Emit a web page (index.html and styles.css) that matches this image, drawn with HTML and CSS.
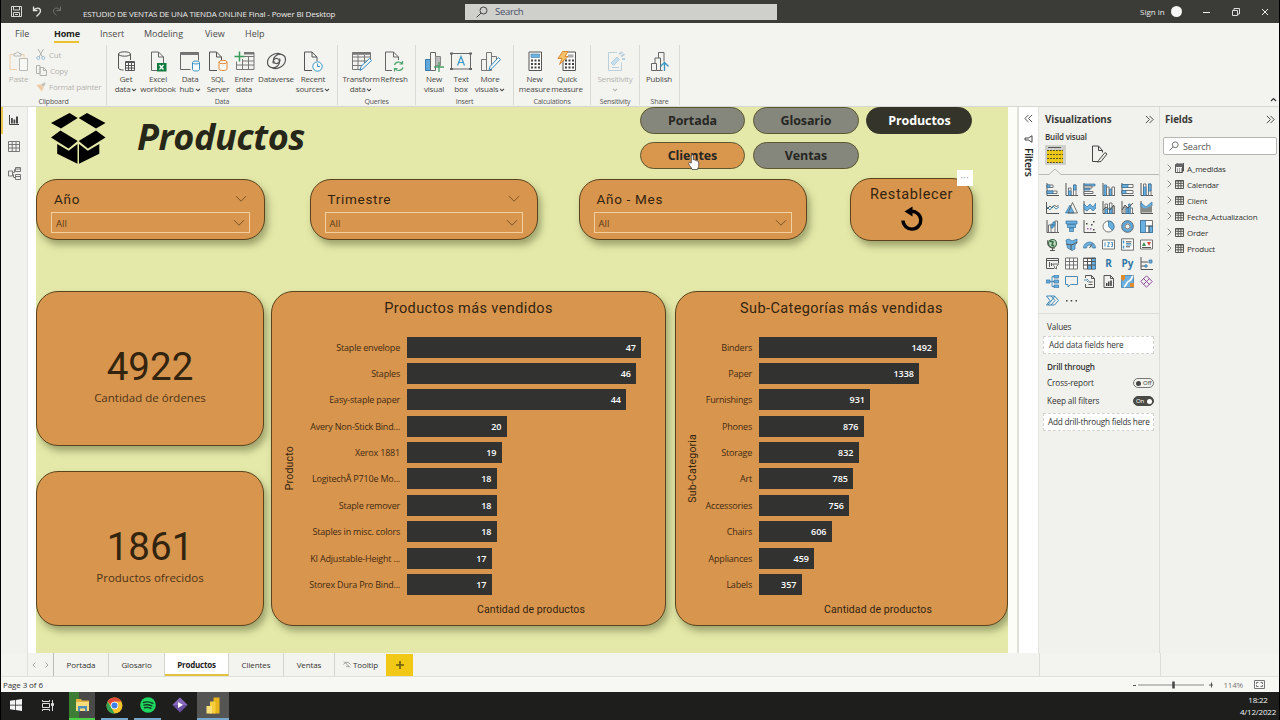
FILE: index.html
```html
<!DOCTYPE html>
<html lang="es">
<head>
<meta charset="utf-8">
<title>ESTUDIO DE VENTAS DE UNA TIENDA ONLINE Final - Power BI Desktop</title>
<link rel="stylesheet" href="styles.css">
</head>
<body>
<svg class="defs" width="0" height="0">
  <symbol id="chev" viewBox="0 0 12 8"><path d="M1 1.2l5 5 5-5" fill="none" stroke="currentColor"/></symbol>
  <symbol id="mini" viewBox="0 0 6 4"><path d="M1 .8l2 2 2-2" fill="none" stroke="currentColor" stroke-width="1.1"/></symbol>
  <symbol id="dbl" viewBox="0 0 10 10"><path d="M1 1l4 4-4 4M5 1l4 4-4 4" fill="none" stroke="currentColor"/></symbol>
  <symbol id="mag" viewBox="0 0 12 12"><circle cx="7.500" cy="4.500" r="3.500" fill="none" stroke="currentColor"/><path d="M5 7l-4.300 4.300" stroke="currentColor" fill="none"/></symbol>
  <symbol id="tbl" viewBox="0 0 9 9"><path d="M.5 .5h8v8h-8zM.5 3.300h8M.5 5.800h8M3.200 .5v8M5.900 .5v8" fill="none" stroke="#4a4a47" stroke-width=".9"/><path d="M.5 .5h8v1h-8z" fill="#4a4a47"/></symbol>
</svg>
<div class="app">
  <header class="titlebar">
    <div class="quick">
      <svg width="11" height="11" viewBox="0 0 11 11" fill="none" stroke="#d8d8d4"><path d="M.5 .5h10v10h-10zM2.500 .5v3.500h6v-3.500M2.500 10.500v-4h6v4M4 8.500h3"/></svg>
      <svg width="10" height="11" viewBox="0 0 10 11" fill="none" stroke="#e4e4e0" stroke-width="1.300"><path d="M1.500 .5v4h4M1.500 4.500c2-3.500 7-3 7 .500 0 1.800-1.500 3-4 5.500"/></svg>
      <svg width="10" height="11" viewBox="0 0 10 11" fill="none" stroke="#74746f"><path d="M8.500 .5v4h-4M8.500 4.500c-2-3.500-7-3-7 .500 0 1.800 1.500 3 3 4.500"/></svg>
    </div>
    <div class="doc-title">ESTUDIO DE VENTAS DE UNA TIENDA ONLINE Final - Power BI Desktop</div>
    <div class="search-top"><svg width="12" height="12"><use href="#mag"/></svg><span>Search</span></div>
    <div class="win">
      <span class="signin">Sign in</span><i class="avatar"></i>
      <svg class="w-min" width="8" height="8"><path d="M0 4.500h7" stroke="#eee"/></svg>
      <svg class="w-max" width="8" height="8" fill="none" stroke="#ddd"><path d="M.5 2.500h5v5h-5zM2 2.500v-2h5.500v5.500h-2"/></svg>
      <svg width="8" height="8" stroke="#eee"><path d="M1 1l6 6M7 1l-6 6"/></svg>
    </div>
  </header>

  <section class="ribbon">
    <nav class="menu">
      <span class="m-file">File</span><span class="m-home">Home</span><span class="m-insert">Insert</span><span class="m-model">Modeling</span><span class="m-view">View</span><span>Help</span>
    </nav>
    <div class="groups">
      <div class="group g-clip">
        <div class="clip">
          <div class="tool paste"><svg width="20" height="21" viewBox="0 0 20 21" fill="none"><path d="M8 18.500h-7v-15h4M11 3.500h4v3" stroke="#efcfa8"/><path d="M5 5v-2.500h2c0-2 3-2 3 0h2v2.500z" stroke="#b9b9b6"/><path d="M10.500 7.500h8v12h-8z" stroke="#b9b9b6" fill="#f7f7f4"/></svg><span>Paste</span></div>
          <div class="clip-list">
            <div><svg width="10" height="11" viewBox="0 0 10 11" fill="none"><path d="M2 0l4.500 8M7.500 0l-4.500 8" stroke="#b0b0ad"/><circle cx="2.200" cy="9" r="1.500" stroke="#9fc4de"/><circle cx="7.300" cy="9" r="1.500" stroke="#9fc4de"/></svg><span>Cut</span></div>
            <div><svg width="11" height="11" viewBox="0 0 11 11" fill="none" stroke="#b0b0ad"><path d="M.5 .5h3.500v8h-3.500zM4 2.500h3.500l3 3v5h-6.500zM7.500 2.500v3h3"/></svg><span>Copy</span></div>
            <div><svg width="10" height="10" viewBox="0 0 10 10"><path d="M.5 3l4-.5 3 3-1.500 4z" fill="#f0c9a0"/><path d="M5 2.500l3.500-2 1 1-2 3.500z" fill="#bdbdb9"/></svg><span>Format painter</span></div>
          </div>
        </div>
        <b>Clipboard</b>
      </div>
      <div class="group g-data">
        <div class="tools">
          <div class="tool t32"><svg width="20" height="21" viewBox="0 0 20 21" fill="none" stroke="#555"><path d="M2.500 3v14c0 1.200 2 2 5 2M14.500 3v6"/><ellipse cx="8.500" cy="3" rx="6" ry="2.200"/><path d="M9.500 10.500h9v9h-9z" fill="#f6f6f3"/><path d="M9.500 11.500h9M9.500 14.500h9M9.500 17h9M12.500 11v8.500M15.500 11v8.500"/></svg><span>Get</span><span>data <svg width="6" height="4"><use href="#mini"/></svg></span></div>
          <div class="tool t32"><svg width="20" height="21" viewBox="0 0 20 21"><path d="M10 19.500h-6.500v-18.500h7l5 5v6M10.500 1v5h5" fill="none" stroke="#666"/><path d="M9 12h9.500v8.500h-9.500z" fill="#107c41"/><path d="M11.500 14l4 4.500M15.500 14l-4 4.500" stroke="#fff" stroke-width="1.300"/></svg><span>Excel</span><span>workbook</span></div>
          <div class="tool t32"><svg width="22" height="21" viewBox="0 0 22 21" fill="none"><path d="M11.500 18.500h-10v-17h18v8" stroke="#666"/><path d="M1.500 1.500h18v2.500h-18z" fill="#777"/><path d="M13.500 11.500v7c0 2 7 2 7 0v-7" fill="#f6fafc" stroke="#3b95c4"/><ellipse cx="17" cy="11.500" rx="3.500" ry="1.500" stroke="#3b95c4"/></svg><span>Data</span><span>hub <svg width="6" height="4"><use href="#mini"/></svg></span></div>
          <div class="tool t24"><svg width="20" height="21" viewBox="0 0 20 21" fill="none"><path d="M9 19.500h-7.500v-18.500h7l5 5v3M8.500 1v5h5" stroke="#555"/><path d="M11 11v7c0 2 8 2 8 0v-7" stroke="#e08a3c" fill="#faf6f0"/><ellipse cx="15" cy="11" rx="4" ry="1.700" stroke="#e08a3c"/></svg><span>SQL</span><span>Server</span></div>
          <div class="tool t28"><svg width="21" height="21" viewBox="0 0 21 21" fill="none" stroke="#777"><path d="M10 1.500h10v17h-17.500v-8M10 5.500h10M8 10h12M2.500 14h17.500M8.500 8v10.500M14.500 5.500v13"/><path d="M10 2.500h10" stroke-width="2"/><path d="M5.500 .5v10M.5 5.500h10" stroke="#3a9b5a" stroke-width="1.500"/></svg><span>Enter</span><span>data</span></div>
          <div class="tool t36"><svg width="21" height="21" viewBox="0 0 21 21" fill="none" stroke="#555" stroke-width="1.200"><path d="M14.500 3c-5-2-12.500 2-13 8-.3 5.500 6 7.500 10 4 3-2.500 2.500-7-.500-7.500-3-.4-5 3-3.500 5"/><path d="M6.500 17c5 2 12.500-2 13-8 .3-5.500-6-7.500-10-4-3 2.500-2.500 7 .500 7.500 3 .4 5-3 3.500-5"/></svg><span>Dataverse</span></div>
          <div class="tool t38"><svg width="20" height="21" viewBox="0 0 20 21" fill="none"><path d="M9 19.500h-7.500v-18.500h7.500l5 5v4M9 1v5h5" stroke="#555"/><circle cx="14.500" cy="15.500" r="4.700" stroke="#3b95c4" fill="#f6fafc"/><path d="M14.500 12.500v3h2.500" stroke="#3b95c4"/></svg><span>Recent</span><span>sources <svg width="6" height="4"><use href="#mini"/></svg></span></div>
        </div>
        <b>Data</b>
      </div>
      <div class="group g-query">
        <div class="tools">
          <div class="tool t36"><svg width="21" height="21" viewBox="0 0 21 21" fill="none" stroke="#777"><path d="M10 18.500h-8.500v-17h18v7M1.500 6h18M1.500 10h16M1.500 14.500h10M7 4v14.500M13.500 4v8"/><path d="M1.500 2.500h18" stroke-width="2.500"/><path d="M9 19.500l1-4 8.500-8 2 2-8.500 8z" fill="#f2f8fc" stroke="#3b86b8"/></svg><span>Transform</span><span>data <svg width="6" height="4"><use href="#mini"/></svg></span></div>
          <div class="tool t30"><svg width="20" height="21" viewBox="0 0 20 21" fill="none"><path d="M8 19.500h-6.500v-18.500h8l5 5v3M9.500 1v5h5" stroke="#666"/><path d="M10.500 14c1-3.500 6-4 8-1M18.500 10v3h-3M19 16.500c-1 3.500-6 4-8 1M10.500 20.500v-3h3" stroke="#4aa36a" stroke-width="1.200"/></svg><span>Refresh</span></div>
        </div>
        <b>Queries</b>
      </div>
      <div class="group g-insert">
        <div class="tools">
          <div class="tool t28"><svg width="20" height="21" viewBox="0 0 20 21"><path d="M1.500 8.500h5v11h-5z" fill="#5fa8dc" stroke="#3b78a8"/><path d="M6.500 1.500h5v18h-5z" fill="#f6f6f3" stroke="#666"/><path d="M11.500 5.500h5v9h-5z" fill="#bbb" stroke="#888"/><path d="M15 11v10M10 16h10" stroke="#4aa36a" stroke-width="1.300"/></svg><span>New</span><span>visual</span></div>
          <div class="tool t26"><svg width="22" height="21" viewBox="0 0 22 21" fill="none"><path d="M1.500 2.500h19v15.500h-19z" stroke="#666"/><path d="M0 1.500h3v2h-3zM19 1.500h3v2h-3zM0 17h3v2h-3zM19 17h3v2h-3z" fill="#666"/><path d="M7.500 14.500l3.500-9 3.500 9M8.700 11.500h4.600" stroke="#3b95c4" stroke-width="1.200"/></svg><span>Text</span><span>box</span></div>
          <div class="tool t32"><svg width="21" height="21" viewBox="0 0 21 21" fill="none"><path d="M1.500 8.500h5v11h-5zM6.500 1.500h5v18h-5zM11.500 5.500h5v4" stroke="#777"/><path d="M9 19.500l1-4 8.500-9 2 2-8.500 9z" fill="#f2f8fc" stroke="#3b86b8"/></svg><span>More</span><span>visuals <svg width="6" height="4"><use href="#mini"/></svg></span></div>
        </div>
        <b>Insert</b>
      </div>
      <div class="group g-calc">
        <div class="tools">
          <div class="tool t31"><svg width="20" height="21" viewBox="0 0 20 21"><path d="M4 1h12.500v18.500h-12.500z" fill="#fbfbf9" stroke="#555"/><path d="M6 3h8.500v3.500h-8.500z" fill="#6eb3e0" stroke="#3b78a8" stroke-width=".6"/><path d="M6 9.500h9M6 13h9M6 16.500h9" stroke="#444" stroke-width="2" stroke-dasharray="2 1.500"/></svg><span>New</span><span>measure</span></div>
          <div class="tool t34"><svg width="22" height="21" viewBox="0 0 22 21"><path d="M7 1h12.500v18.500h-12.500z" fill="#fbfbf9" stroke="#555"/><path d="M12 3.500h5.500v3h-5.500z" fill="#aaa"/><path d="M9 9.500h9M9 13h9M9 16.500h9" stroke="#444" stroke-width="2" stroke-dasharray="2 1.500"/><path d="M6.500 .5h5.500l-3 5h3l-8.500 8 2.500-6h-4z" fill="#f7c26a" stroke="#d9822b" stroke-width=".9"/></svg><span>Quick</span><span>measure</span></div>
        </div>
        <b>Calculations</b>
      </div>
      <div class="group g-sens">
        <div class="tools dim">
          <div class="tool t48"><svg width="21" height="21" viewBox="0 0 21 21" fill="none" stroke="#b7cfdd"><path d="M12 1.500h-8.500v18h13v-8" stroke="#bcd0da"/><path d="M6 12l6-6 2.500 2.500-6 6z" fill="#c4e0ef"/><path d="M14 3l3.500-2M16 5.500l3.500-2.500M17 8h3" stroke-width="2"/><path d="M7 16.500h7"/></svg><span>Sensitivity</span><span><svg width="6" height="4"><use href="#mini"/></svg></span></div>
        </div>
        <b>Sensitivity</b>
      </div>
      <div class="group g-share">
        <div class="tools">
          <div class="tool t38"><svg width="20" height="21" viewBox="0 0 20 21" fill="none" stroke="#666"><path d="M2.500 12.500h5v7h-5zM6 12.500v-5.500h5.500v12.500h-4M9.500 7v-5.500h5.500v9M11.500 19.500h2"/><path d="M15.500 20v-8M11.500 15.500l4-4 4 4" stroke="#3b95c4" stroke-width="1.300"/></svg><span>Publish</span></div>
        </div>
        <b>Share</b>
      </div>
      <svg class="collapse" width="7" height="5"><path d="M1 4l2.500-2.500L6 4" fill="none" stroke="#333" stroke-width="1.200"/></svg>
    </div>
  </section>

  <main class="work">
    <aside class="rail">
      <span class="rail-on"><svg width="10" height="10" viewBox="0 0 10 10"><path d="M.5 0v9.500h9.500" fill="none" stroke="#444"/><path d="M2 3h1.800v5.500h-1.800zM4.500 4.500h1.800v4h-1.800zM7 1.500h2v7h-2z" fill="#444"/></svg></span>
      <span><svg width="12" height="11" viewBox="0 0 12 11" fill="none" stroke="#777"><path d="M.5 .5h11v10h-11zM.5 3.500h11M.5 7h11M4.200 .5v10M8 .5v10"/></svg></span>
      <span><svg width="13" height="13" viewBox="0 0 13 13" fill="none" stroke="#777"><path d="M.5 4h4v5h-4zM7.500 .5h5v4h-5zM7.500 7.500h5v5h-5zM4.500 5.500h2v-3h1M4.500 7.500h1v3h2M7.500 9.500h5M7.500 2h5"/></svg></span>
    </aside>
    <div class="gutter"></div>
    <section class="canvas">
      <div class="head">
        <svg class="box" width="57" height="52" viewBox="0 0 57 52"><path d="M1 10L19.500 0l8.200 5L11 15.500zM28.700 5L37 0l18.500 10-9.500 5.500zM1 24.500l9.500-7L27.700 28l-9.200 7.500zM55.500 24.500l-9.500-7L28.700 28l9.200 7.500zM7.200 31l11.500 6.800 8.800-6.800v19.800l-20.300-10zM49.300 31l-11.500 6.800L29 31v19.800l20.300-10z" fill="#000"/></svg>
        <h1>Productos</h1>
        <nav class="nav">
          <a>Portada</a><a>Glosario</a><a class="cur">Productos</a><a class="hot">Clientes<svg class="hand" width="12" height="16" viewBox="0 0 12 16"><path d="M3.300 9V1.800c0-1.300 1.900-1.300 1.900 0V6c.2-1 1.700-1 1.900 0v.6c.3-.9 1.700-.8 1.800.2v.6c.4-.7 1.800-.5 1.800.6v3.500c0 2-1 2.500-1.200 4H4C3.800 13.500 1.500 12 .7 9.800.3 8.500 1.500 8 2.200 8.800z" fill="#fff" stroke="#333" stroke-width=".7"/></svg></a><a>Ventas</a>
        </nav>
      </div>
      <div class="slicers">
        <div class="slicer s1"><div class="s-head"><span>Año</span><svg width="12" height="8"><use href="#chev"/></svg></div><div class="s-box"><span>All</span><svg width="12" height="8"><use href="#chev"/></svg></div></div>
        <div class="slicer s2"><div class="s-head"><span>Trimestre</span><svg width="12" height="8"><use href="#chev"/></svg></div><div class="s-box"><span>All</span><svg width="12" height="8"><use href="#chev"/></svg></div></div>
        <div class="slicer s3"><div class="s-head"><span>Año - Mes</span></div><div class="s-box"><span>All</span><svg width="12" height="8"><use href="#chev"/></svg></div></div>
        <div class="reset"><span>Restablecer</span><svg width="24" height="26" viewBox="0 0 24 26"><path d="M11.500 5.300A8.900 8.900 0 1 1 3 14.500" fill="none" stroke="#000" stroke-width="3.400"/><path d="M12.500 .5v10L4.500 5.500z" fill="#000"/></svg><i class="more">•••</i></div>
      </div>
      <div class="grid">
        <div class="kpis">
          <div class="card kpi k1"><strong>4922</strong><span>Cantidad de órdenes</span></div>
          <div class="card kpi"><strong>1861</strong><span>Productos ofrecidos</span></div>
        </div>
        <div class="card chart c1">
          <h2>Productos más vendidos</h2>
          <div class="plot">
            <div class="ytitle"><span>Producto</span></div>
            <div class="rows">
              <div class="row"><label>Staple envelope</label><i style="width:234px">47</i></div>
              <div class="row"><label>Staples</label><i style="width:229px">46</i></div>
              <div class="row"><label>Easy-staple paper</label><i style="width:219px">44</i></div>
              <div class="row"><label>Avery Non-Stick Bind...</label><i style="width:99.500px">20</i></div>
              <div class="row"><label>Xerox 1881</label><i style="width:94.500px">19</i></div>
              <div class="row"><label>LogitechÂ P710e Mo...</label><i style="width:89.500px">18</i></div>
              <div class="row"><label>Staple remover</label><i style="width:89.500px">18</i></div>
              <div class="row"><label>Staples in misc. colors</label><i style="width:89.500px">18</i></div>
              <div class="row"><label>KI Adjustable-Height ...</label><i style="width:84.500px">17</i></div>
              <div class="row"><label>Storex Dura Pro Bind...</label><i style="width:84.500px">17</i></div>
            </div>
          </div>
          <p>Cantidad de productos</p>
        </div>
        <div class="card chart c2">
          <h2>Sub-Categorías más vendidas</h2>
          <div class="plot">
            <div class="ytitle"><span>Sub-Categoria</span></div>
            <div class="rows">
              <div class="row"><label>Binders</label><i style="width:178px">1492</i></div>
              <div class="row"><label>Paper</label><i style="width:160px">1338</i></div>
              <div class="row"><label>Furnishings</label><i style="width:111px">931</i></div>
              <div class="row"><label>Phones</label><i style="width:104.500px">876</i></div>
              <div class="row"><label>Storage</label><i style="width:99.500px">832</i></div>
              <div class="row"><label>Art</label><i style="width:94px">785</i></div>
              <div class="row"><label>Accessories</label><i style="width:90px">756</i></div>
              <div class="row"><label>Chairs</label><i style="width:72.500px">606</i></div>
              <div class="row"><label>Appliances</label><i style="width:55px">459</i></div>
              <div class="row"><label>Labels</label><i style="width:42.500px">357</i></div>
            </div>
          </div>
          <p>Cantidad de productos</p>
        </div>
      </div>
    </section>
    <div class="edge"></div>
    <aside class="filters">
      <svg class="flip" width="9" height="9"><use href="#dbl"/></svg>
      <svg width="9" height="8" viewBox="0 0 9 8" fill="none" stroke="#444"><path d="M8 .7v6.600L4.500 5H1V3h3.500z"/></svg>
      <span>Filters</span>
    </aside>
    <aside class="viz">
      <div class="p-head"><span>Visualizations</span><svg width="9" height="9"><use href="#dbl"/></svg></div>
      <div class="build">Build visual</div>
      <div class="modes">
        <span class="mode-on"><svg width="18" height="18" viewBox="0 0 18 18"><path d="M2 1.500h13" stroke="#555"/><path d="M1 4h16v13h-16z" fill="#ecc81a"/><path d="M1 4.500h16M1 8.500h16M1 12.500h16M1 16.500h16" stroke="#5a5220" stroke-dasharray="2 1"/></svg></span>
        <svg width="17" height="18" viewBox="0 0 17 18" fill="none" stroke="#444"><path d="M8 16.500H1.500V1h6l4 4.500v2M7.500 1v4.500h4"/><path d="M7.500 15.500L14 7.500l2 1.500-6 7.500-4 .5z" fill="#f1f2ed"/></svg>
      </div>
      <div class="caret"><svg width="120" height="8" fill="none" stroke="#b8b9b4"><path d="M0 6.500h10l6-5.500 6 5.500h98"/></svg></div>
      <div class="icons">
        <svg viewBox="0 0 13 13"><path d="M1 0v12.500h12" class="ax"/><path d="M1 2h6M1 2v2.500h6V2M1 8h10v2.500H1z" class="ol"/><path d="M1 2h3v2.500H1zM1 8h6v2.500H1z" class="bl"/></svg>
        <svg viewBox="0 0 13 13"><path d="M1 0v12.500h12" class="ax"/><path d="M3.500 5h2.500v7.500H3.500zM8.500 2h2.500v10.500H8.500z" class="ol"/><path d="M3.500 8h2.500v4.500H3.500zM8.500 2h2.500v5H8.500z" class="bl"/></svg>
        <svg viewBox="0 0 13 13"><path d="M1 0v12.500h12" class="ax"/><path d="M1 1h11v2H1zM1 5h6v2H1z" class="bl"/><path d="M1 3h8v2H1zM1 8.500h9v2H1z" class="ol"/></svg>
        <svg viewBox="0 0 13 13"><path d="M1 0v12.500h12" class="ax"/><path d="M2 2h2.500v10.500H2zM7.500 6h2.500v6.500H7.500z" class="bl"/><path d="M4.500 4h2.500v8.500H4.500zM10 4h2.500v8.500H10z" class="ol"/></svg>
        <svg viewBox="0 0 13 13"><path d="M1 0v12.500h12" class="ax"/><path d="M1 1.500h11v3H1zM1 7.500h11v3H1z" class="ol"/><path d="M1 1.500h6v3H1zM1 7.500h4v3H1z" class="bl"/></svg>
        <svg viewBox="0 0 13 13"><path d="M1 0v12.500h12" class="ax"/><path d="M3.500 1h2.500v11.500H3.500zM8.500 1h2.500v11.500H8.500z" class="ol"/><path d="M3.500 4h2.500v8.500H3.500zM8.500 1h2.500v7H8.500z" class="bl"/></svg>

        <svg viewBox="0 0 13 13"><path d="M.5 1v11.500h12.500" class="ax"/><path d="M1 8l3-3 2 2 2.500-3 2 2 2-2" class="ax"/><path d="M1 6l3 3 3-4 3 3 3-2" class="bs"/></svg>
        <svg viewBox="0 0 13 13"><path d="M.5 12L5 4l4 8z" class="bl"/><path d="M3 12L7.500 1.500 12.500 12z" class="ol2"/></svg>
        <svg viewBox="0 0 13 13"><path d="M1 0v12.500h12" class="ax"/><path d="M1 3l3 3 3-3 3 3 3-4v5l-3 3-3-3-3 3-3-2z" class="bl"/></svg>
        <svg viewBox="0 0 13 13"><path d="M1 0v12.500h12" class="ax"/><path d="M3 3h2.500v9.500H3zM7.500 2h2.500v10.500H7.500zM11 5h1.500v7.500H11z" class="ol"/><path d="M3 8h2.500v4.500H3zM7.500 7h2.500v5.500H7.500z" class="bl"/><path d="M1 9l3-3 4 3 4-5" class="ax"/></svg>
        <svg viewBox="0 0 13 13"><path d="M1 0v12.500h12" class="ax"/><path d="M3 6h2v6.500H3zM9 7h2.500v5.500H9z" class="ol"/><path d="M5 7h2v5.500H5zM7.500 3h1.800v9.500H7.500z" class="bl"/><path d="M1 9l3-5 3 3 5-5" class="ax"/></svg>
        <svg viewBox="0 0 13 13"><path d="M1 0v12.500h12" class="ax"/><path d="M1 2l5 4 6-5v4l-6 5-5-4z" class="bl"/><path d="M1 6l5 1.500 6-3v7H1z" fill="#8a8a86"/></svg>

        <svg viewBox="0 0 13 13"><path d="M1 0v12.500h12" class="ax"/><path d="M2.500 5h2.500v7.500H2.500zM9 1h2.500v11.500H9z" class="ol"/><path d="M5 4h2v4H5zM7 2h2v4H7z" class="bl"/></svg>
        <svg viewBox="0 0 13 13"><path d="M1 1h11v3H1zM2.500 4.500h8v3h-8zM4.500 8h4v3.500h-4z" class="bl"/></svg>
        <svg viewBox="0 0 13 13"><path d="M1 0v12.500h12" class="ax"/><path d="M3 3h1.500v1.500H3zM8 4h1.500v1.500H8zM10 1h1.500v1.500H10zM10 9h1.500v1.500H10z" fill="#444"/><path d="M4 8h1.500v1.500H4zM7 8h1.500v1.500H7z" fill="#a36bb5"/></svg>
        <svg viewBox="0 0 13 13"><circle cx="6.500" cy="6.500" r="5.500" class="ol"/><path d="M6.500 1a5.500 5.500 0 0 1 3.900 9.400L6.500 6.500z" class="bl"/></svg>
        <svg viewBox="0 0 13 13"><circle cx="6.500" cy="6.500" r="4.300" fill="none" stroke="#5ea6d8" stroke-width="2.800"/><circle cx="6.500" cy="6.500" r="5.900" class="ol2"/><circle cx="6.500" cy="6.500" r="2.500" fill="#f1f2ed" stroke="#555" stroke-width=".8"/></svg>
        <svg viewBox="0 0 13 13"><path d="M.5 .5h12v12H.5z" class="ol"/><path d="M.5 .5h5v12h-5zM9 6h3.500v6.500H9z" class="bl"/><path d="M5.500 6h7M9 6v6.500" class="ax"/></svg>

        <svg viewBox="0 0 13 13"><circle cx="6.500" cy="5.500" r="4" fill="#bcd8c0" stroke="#3f6b4b" stroke-width="1.200"/><path d="M4 3l3 1-1 3 2 1" stroke="#2f6b3b" stroke-width="1.500" fill="none"/><path d="M2 2c-2 5 2 9 7 8M6.500 10v2M4 12.500h5" class="ax"/></svg>
        <svg viewBox="0 0 13 13"><path d="M1 2l3-1 3 2 5-2v4l-2 2v4l-3 1.500L2.500 10z" class="bl"/><path d="M1 6l5 1 3-1 3-2M6 7v5" class="ax"/></svg>
        <svg viewBox="0 0 13 13"><path d="M.5 10a6 6 0 0 1 12 0h-3a3 3 0 0 0-6 0z" class="bl"/><path d="M6.500 10l3-4.500" class="ax"/></svg>
        <svg viewBox="0 0 13 13"><path d="M.5 2h12v9H.5z" class="ol"/><path d="M3 4.500v4M5.500 4.500h2l-2 4h2M9 4.500h1.500v4H9M9.500 6.500h1" class="bs"/></svg>
        <svg viewBox="0 0 13 13"><path d="M.5 .8h12v11.400H.5z" class="ol"/><path d="M5 3.800h5.500M5 8.800h4" class="ax"/><path d="M2.500 2.500v3M2.500 7.500v3" stroke="#4a9bd4" stroke-width="1.500"/><path d="M5 5.500h5M5 7h5.500" class="bs"/></svg>
        <svg viewBox="0 0 13 13"><path d="M.5 2h12v9H.5z" class="ol"/><path d="M2 8l2-4 2 4z" fill="#3e8d52"/><path d="M7 4h4l-2 4z" fill="#d6483a"/><path d="M2 9.500h9" class="ax"/></svg>

        <svg viewBox="0 0 13 13"><path d="M8 11.500H.5v-10h12v5M.5 3.500h12M3.500 5v5M5.500 6v3" class="ax"/><path d="M6.500 7h6l-2 2.500v2.500l-2-1V9.500z" class="ol2"/></svg>
        <svg viewBox="0 0 13 13"><path d="M.5 1h12v11H.5zM.5 4.500h12M.5 8h12M4.500 1v11M8.500 1v11" class="ol"/></svg>
        <svg viewBox="0 0 13 13"><path d="M.5 1h12v11H.5z" class="ol"/><path d="M8.500 1h4v11h-4zM4.500 8h4v4h-4z" class="bl"/><path d="M.5 4.500h12M.5 8h12M4.500 1v11M8.500 1v11M.5 1.500h12" class="ax"/></svg>
        <em>R</em>
        <em>Py</em>
        <svg viewBox="0 0 13 13"><path d="M1 0v12.500h12M1 5h7M1 9h4" class="ax"/><circle cx="6" cy="9" r="1.300" class="bl"/><path d="M9 3h3v3H9z" class="bl"/></svg>

        <svg viewBox="0 0 13 13"><path d="M0 5h4v3H0zM8 0h4.500v3H8zM8 5h4.500v3H8zM8 10h4.500v3H8z" class="bl"/><path d="M4 6.500h4M6 1.500v10M6 1.500h2M6 11.500h2" class="bs"/></svg>
        <svg viewBox="0 0 13 13"><path d="M.5 1.500h12v8H5.500L3 12V9.500H.5z" fill="none" stroke="#4d8ab5"/></svg>
        <svg viewBox="0 0 13 13"><path d="M2.500 3V.5h6l3 3v9h-9V9M8.500 .5v3h3M5.500 7h4M5.500 9.500h4" class="ax"/><path d="M1 5h3M4 4l1.500 1.500L4 7" class="bs"/></svg>
        <svg viewBox="0 0 13 13"><path d="M2 .5h6.500l3 3v9H2zM8.500 .5v3h3" class="ax"/><path d="M4 8h1.500v3H4zM6 6.500h1.500V11H6zM8.200 5.500h1.600V11H8.200z" fill="#444"/></svg>
        <svg viewBox="0 0 13 13"><path d="M.5 .5h12v12H.5z" class="bl"/><path d="M3 12c3-2 2-5 5-6s2-3 4-5" stroke="#fff" stroke-width="1.800" fill="none"/><path d="M0 0h4v4L2 6 0 4zM9 8h4v4H9z" fill="#df8a2c"/></svg>
        <svg viewBox="0 0 13 13" fill="none" stroke="#8d4a9b"><path d="M6.500 .8l5.700 5.700-5.700 5.700L.8 6.500zM3.500 3.500l6 6M9.500 3.500l-6 6"/></svg>

        <svg viewBox="0 0 13 13" fill="none" stroke="#3b86b8"><path d="M.5 2h8l4 4.500-4 4.500h-8L4 6.500zM5 2l4 4.500L5 11M2 11l7-9"/></svg>
        <svg viewBox="0 0 13 13"><path d="M1 6h1.500v1.500H1zM5.700 6h1.500v1.500H5.700zM10.500 6H12v1.500h-1.500z" fill="#444"/></svg>
      </div>
      <div class="wells">
        <div class="lbl">Values</div>
        <div class="well">Add data fields here</div>
        <div class="lbl strong">Drill through</div>
        <div class="toggle-row r1"><span>Cross-report</span><span class="tog"><i></i>Off</span></div>
        <div class="toggle-row r2"><span>Keep all filters</span><span class="tog on">On<i></i></span></div>
        <div class="well w2">Add drill-through fields here</div>
      </div>
    </aside>
    <aside class="fields">
      <div class="p-head"><span>Fields</span><svg width="9" height="9"><use href="#dbl"/></svg></div>
      <div class="f-search"><svg width="10" height="10"><use href="#mag"/></svg><span>Search</span></div>
      <ul>
        <li><svg width="5" height="8" viewBox="0 0 5 8"><path d="M.7 .7L4 4 .7 7.300" fill="none" stroke="#888"/></svg><svg width="9" height="10" viewBox="0 0 9 10"><path d="M2 1V0h6.500v8h-1M.5 1.500h7v8h-7z" fill="none" stroke="#555"/><path d="M.5 1.500h7v2.500h-7z" fill="#666"/><path d="M2 6h5M2 8h5" stroke="#555" stroke-dasharray="1 1"/></svg><span>A_medidas</span></li>
        <li><svg width="5" height="8" viewBox="0 0 5 8"><path d="M.7 .7L4 4 .7 7.300" fill="none" stroke="#888"/></svg><svg width="9" height="9"><use href="#tbl"/></svg><span>Calendar</span></li>
        <li><svg width="5" height="8" viewBox="0 0 5 8"><path d="M.7 .7L4 4 .7 7.300" fill="none" stroke="#888"/></svg><svg width="9" height="9"><use href="#tbl"/></svg><span>Client</span></li>
        <li><svg width="5" height="8" viewBox="0 0 5 8"><path d="M.7 .7L4 4 .7 7.300" fill="none" stroke="#888"/></svg><svg width="9" height="9"><use href="#tbl"/></svg><span>Fecha_Actualizacion</span></li>
        <li><svg width="5" height="8" viewBox="0 0 5 8"><path d="M.7 .7L4 4 .7 7.300" fill="none" stroke="#888"/></svg><svg width="9" height="9"><use href="#tbl"/></svg><span>Order</span></li>
        <li><svg width="5" height="8" viewBox="0 0 5 8"><path d="M.7 .7L4 4 .7 7.300" fill="none" stroke="#888"/></svg><svg width="9" height="9"><use href="#tbl"/></svg><span>Product</span></li>
      </ul>
    </aside>
  </main>

  <footer class="foot">
    <div class="pages">
      <span class="arrows"><svg width="4" height="6"><path d="M3.500 .5L1 3l2.500 2.500" fill="none" stroke="#aaa"/></svg><svg width="4" height="6"><path d="M.5 .5L3 3 .5 5.500" fill="none" stroke="#aaa"/></svg></span>
      <span class="pg p1">Portada</span><span class="pg p2">Glosario</span><span class="pg p3">Productos</span><span class="pg p4">Clientes</span><span class="pg p5">Ventas</span>
      <span class="pg p6"><svg width="8" height="7" viewBox="0 0 8 7" fill="none" stroke="#888" stroke-width=".8"><path d="M.5 3.500c2-3 5-3 7 0M1 .5l6 6M3 5c.5.800 2 1 3 0"/></svg>Tooltip</span>
      <span class="plus"><svg width="8" height="8"><path d="M4 0v8M0 4h8" stroke="#6a5a10" stroke-width="1.600"/></svg></span>
      <span class="pane-a"></span><span class="pane-b"></span>
    </div>
    <div class="status">
      <span>Page 3 of 6</span>
      <div class="zoom"><svg width="80" height="10" viewBox="0 0 80 10"><path d="M0 5.500h3M76 5h5M78.500 2.500v5" stroke="#555"/><path d="M5 5h66" stroke="#8a8a87"/><path d="M40.500 1.500v7" stroke="#444" stroke-width="2.500"/></svg><span>114%</span><svg width="11" height="9" viewBox="0 0 11 9" fill="none" stroke="#777"><path d="M.5 .5h10v8h-10z"/><path d="M2.500 4v-1.500h2M8.500 5v1.500h-2M8.500 4v-1.500h-2M2.500 5v1.500h2"/></svg></div>
    </div>
  </footer>

  <div class="taskbar">
    <span class="tk win-k"><svg width="12" height="12" viewBox="0 0 12 12" fill="#f4f4f4"><path d="M0 1.800l5-.7v4.600H0zM5.700 1L12 0v5.700H5.700zM0 6.400h5V11l-5-.7zM5.700 6.400H12V12l-6.300-1z"/></svg></span>
    <span class="tk view-k"><svg width="12" height="11" viewBox="0 0 12 11" fill="none" stroke="#ddd"><path d="M.5 0v1.500h7V0M.5 3.500h7v4h-7zM.5 11V9.500h7V11M10.500 0v11"/><path d="M9.500 3.500h2v2h-2z" fill="#ddd"/></svg></span>
    <span class="tk exp-k"><svg width="15" height="14" viewBox="0 0 15 14"><path d="M1 1h5l1 1.500h7V13H1z" fill="#e3b341"/><path d="M1 4h13v9H1z" fill="#f9dc7b"/><path d="M3 8h9v5.500h-2V10.500H5v3H3z" fill="#4e8fb8"/></svg></span>
    <span class="tk chr-k"><svg width="17" height="17" viewBox="0 0 17 17"><circle cx="8.500" cy="8.500" r="8" fill="#f4c22b"/><path d="M1.600 4.500l3.900 6.500 3 5.500A8 8 0 0 1 1.600 4.500z" fill="#2fa455"/><path d="M1.600 4.500A8 8 0 0 1 15.400 4.500H8.500L5 8z" fill="#e04a3a"/><circle cx="8.500" cy="8.500" r="3.800" fill="#fff"/><circle cx="8.500" cy="8.500" r="3" fill="#3f7fe8"/></svg></span>
    <span class="tk spo-k"><svg width="16" height="16" viewBox="0 0 16 16"><circle cx="8" cy="8" r="7.800" fill="#1ed760"/><path d="M3.500 5.500c3-1 6.500-.8 9.300.8M4 8.200c2.700-.8 5.500-.5 7.900.8M4.500 10.700c2.200-.6 4.500-.4 6.400.7" fill="none" stroke="#14361f" stroke-width="1.400" stroke-linecap="round"/></svg></span>
    <span class="tk mov-k"><svg width="16" height="16" viewBox="0 0 16 16"><path d="M8 .5L15.500 8 8 15.500.5 8z" fill="#6a4fa0"/><path d="M8 .5L15.500 8H.5z" fill="#8468ba"/><path d="M6 5l5 3-5 3z" fill="#fff"/></svg></span>
    <span class="tk pbi-k"><svg width="14" height="17" viewBox="0 0 14 17"><path d="M7.500 .5h6v16h-6z" fill="#e8b41c"/><path d="M4 4.500h5.500v12H4z" fill="#f6cd3c"/><path d="M.5 9h5.500v7.500H.5z" fill="#fbe07a"/></svg></span>
    <div class="clock"><span>18:22</span><span>4/12/2022</span></div>
  </div>
</div>
</body>
</html>
```
FILE: styles.css
```css
* { box-sizing: border-box; }
html, body { margin: 0; height: 100%; overflow: hidden; background: #000; }
body { font-family: "Open Sans", "Noto Sans", sans-serif; color: #333; }
.defs { display: block; position: absolute; }
svg { display: block; flex: none; }
.app { width: 1280px; height: 720px; display: flex; flex-direction: column; border: solid #000; border-width: 0 1px; }

.titlebar { height: 23px; flex: none; background: #3b3b37; display: flex; align-items: center; color: #ececea; font-size: 8px; white-space: nowrap; }
.quick { display: flex; gap: 10px; padding-left: 10px; width: 82px; }
.doc-title { width: 382px; letter-spacing: -.15px; padding-top: 4px; }
.search-top { width: 312px; height: 16px; background: #cfcfcb; display: flex; align-items: center; gap: 7px; padding-left: 11px; font-size: 9.500px; letter-spacing: -.3px; color: #4a4f6a; }
.search-top svg { color: #444; }
.win { flex: 1; display: flex; align-items: center; padding-left: 363px; }
.signin { width: 31px; }
.avatar { width: 11px; height: 11px; border-radius: 50%; background: #f7f7f5; margin-right: 21px; }
.w-min { margin-right: 21px; }
.w-max { margin-right: 21px; }

.ribbon { height: 84px; flex: none; background: #f3f3ef; border-bottom: 1px solid #d6d7cf; display: flex; flex-direction: column; }
.menu { height: 21px; display: flex; font-size: 9px; line-height: 21px; padding-left: 14px; color: #4a4a48; }
.menu span { height: 20px; }
.m-file { width: 39px; }
.m-home { font-weight: 700; color: #222; border-bottom: 2px solid #ecc030; margin-right: 21px; width: 25px; letter-spacing: -.2px; }
.m-insert { width: 44px; }
.m-model { width: 61px; }
.m-view { width: 40px; }
.groups { display: flex; height: 62px; margin-top: 1px; position: relative; }
.group { border-right: 1px solid #d9d9d5; display: flex; flex-direction: column; margin-bottom: 1px; font-size: 8px; letter-spacing: -.2px; flex: none; }
.group b { font-weight: 400; font-size: 7px; line-height: 8px; text-align: center; margin-top: auto; margin-bottom: -1px; color: #555; letter-spacing: -.2px; }
.g-clip { width: 106px; }
.g-data { width: 231px; } .g-data .tools { padding-left: 3px; }
.g-query { width: 78px; } .g-query .tools { padding-left: 5px; }
.g-insert { width: 98px; } .g-insert .tools { padding-left: 4px; }
.g-calc { width: 77px; } .g-calc .tools { padding-left: 5px; }
.g-sens { width: 49px; }
.g-share { width: 40px; }
.tools, .clip { display: flex; padding-top: 6px; height: 53px; }
.tool { display: flex; flex-direction: column; align-items: center; white-space: nowrap; line-height: 10.500px; flex: none; color: #4a4a48; }
.tool > svg { margin-bottom: 2px; }
.tool span svg { display: inline-block; vertical-align: 0; margin-left: -1px; }
.t24 { width: 24px; } .t26 { width: 26px; } .t28 { width: 28px; } .t30 { width: 30px; } .t31 { width: 31px; }
.t32 { width: 32px; } .t34 { width: 34px; } .t36 { width: 36px; } .t38 { width: 38px; } .t48 { width: 48px; }
.dim .tool, .clip .tool, .clip-list { color: #b3b3b0; }
.paste { width: 35px; }
.clip-list { display: flex; flex-direction: column; gap: 0; margin-top: -4px; letter-spacing: -.25px; }
.clip-list div { display: flex; height: 16px; align-items: center; gap: 3px; white-space: nowrap; }
.collapse { position: absolute; right: 2px; bottom: 4px; }

.work { height: 546px; flex: none; display: flex; background: #fff; }
.rail { width: 27px; background: #f1f2ed; border-right: 1px solid #e3e4df; display: flex; flex-direction: column; }
.rail span { height: 26.500px; display: flex; align-items: center; justify-content: center; }
.rail-on { border-left: 2px solid #ecc850; padding-right: 2px; }
.gutter { width: 8px; }
.canvas { width: 972px; background: #e4e9a9; display: flex; flex-direction: column; overflow: hidden; }
.edge { width: 9px; background: #fdfdf8; }
.head { height: 71px; display: flex; flex: none; }
.box { margin: 6px 0 0 14px; }
h1 { margin: 0 0 0 30px; width: 502.500px; font: italic 700 36px/60px "Open Sans", sans-serif; color: #262619; letter-spacing: -.4px; }
.nav { display: grid; grid-template-columns: repeat(3, 105.800px); grid-auto-rows: 27px; gap: 8px 7.700px; }
.nav a { border-radius: 14px; background: #85877d; border: 1px solid #5b5630; text-align: center; font-weight: 700; font-size: 12.500px; letter-spacing: -.1px; line-height: 25px; color: #262622; position: relative; }
.nav .cur { background: #34342a; color: #fff; border-color: #34342a; }
.nav .hot { background: #d9964d; }
.hand { position: absolute; left: 47px; top: 11px; }
.slicers { display: flex; height: 113px; flex: none; }
.slicer, .reset, .card { background: #d8954e; border: 1px solid #5a431d; box-shadow: 3px 5px 7px rgba(90, 95, 50, .5); flex: none; font-family: Roboto, sans-serif; color: #33240f; }
.slicer { width: 228.500px; height: 61px; margin-top: 1px; border-radius: 21px; padding: 10px 14px 0; }
.s2 { margin-left: 45px; } .s3 { margin-left: 40.500px; }
.s-head { display: flex; justify-content: space-between; align-items: center; padding: 0 3px 0 3px; height: 18px; font-size: 13.500px; letter-spacing: .7px; margin-bottom: 4px; }
.slicer svg { color: #7d5424; }
.s-box { border: 1px solid #f2cf9f; height: 21px; display: flex; align-items: center; justify-content: space-between; padding: 1px 4px 0; font: 9.500px "Open Sans", sans-serif; color: #5c3b15; }
.reset { width: 123px; height: 63px; margin-left: 43px; border-radius: 21px; display: flex; flex-direction: column; align-items: center; position: relative; font-size: 14.500px; letter-spacing: .6px; line-height: 18px; padding-top: 7px; }
.reset svg { margin-top: 2px; }
.more { position: absolute; right: -1px; top: -9px; width: 16px; height: 16px; background: #fff; color: #999; font: 5px/16px "Open Sans", sans-serif; letter-spacing: 1px; text-align: center; }
.grid { display: flex; gap: 7px; }
.card { border-radius: 22px; }
.kpis { width: 228px; display: flex; flex-direction: column; gap: 25px; }
.kpi { height: 155px; display: flex; flex-direction: column; align-items: center; padding-top: 52px; }
.kpi strong { font-weight: 400; font-size: 38.500px; line-height: 46px; letter-spacing: 0; }
.kpi span { font: 11.500px/18px "Open Sans", sans-serif; color: #4d3416; margin-top: -1px; }
.c1 { width: 395px; height: 335px; } .c2 { width: 333px; height: 335px; margin-left: 2px; }
.chart h2 { margin: 8px 0 19.500px; font-weight: 400; font-size: 14.500px; line-height: 17px; letter-spacing: .4px; text-align: center; }
.plot { display: flex; }
.ytitle { width: 34px; display: flex; align-items: center; justify-content: center; font-size: 10.500px; }
.c2 .ytitle { width: 33px; }
.ytitle span { writing-mode: vertical-rl; transform: rotate(180deg); letter-spacing: .2px; }
.rows { display: flex; flex-direction: column; }
.row { height: 26.380px; display: flex; }
.row label { width: 94px; font: 9px/21px "Open Sans", sans-serif; text-align: right; color: #422b10; white-space: nowrap; letter-spacing: -.2px; }
.c2 .row label { width: 43px; direction: rtl; }
.row i { height: 21px; background: #323231; margin-left: 7px; color: #fff; font: 600 9px/22px "Open Sans", sans-serif; text-align: right; padding-right: 5px; }
.chart p { margin: 3px 0 0; font-size: 10.500px; line-height: 14px; letter-spacing: .1px; padding-left: 205px; }
.c2 p { padding-left: 148px; }

.filters { width: 22px; border-left: 2px solid #e0e0dc; border-right: 1px solid #e3e4df; display: flex; flex-direction: column; align-items: center; padding-top: 7px; color: #444; }
.flip { transform: scaleX(-1); margin-bottom: 12px; }
.filters span { writing-mode: vertical-rl; font-weight: 600; font-size: 10.500px; line-height: 14px; margin-top: 5px; color: #222; letter-spacing: -.4px; }
.viz { width: 121px; background: #f1f2ed; border-right: 1px solid #dcddd8; }
.fields { flex: 1; background: #f1f2ed; }
.p-head { display: flex; align-items: center; justify-content: space-between; padding: 0 5px 0 6px; height: 24px; font-weight: 700; font-size: 9.800px; color: #3a3a38; letter-spacing: -.1px; }
.fields .p-head { padding: 0 4px 0 5px; }
.build { font-weight: 600; font-size: 8px; line-height: 12px; padding-left: 6px; letter-spacing: -.2px; }
.modes { display: flex; padding-left: 6px; gap: 25px; height: 23px; padding-top: 2px; }
.mode-on { width: 21px; height: 20px; background: #cfcfcb; padding: 1px; }
.caret { height: 8px; margin-top: 2px; }
.icons { display: grid; grid-template-columns: repeat(6, 18.750px); grid-auto-rows: 18.500px; padding: 4px 0 0 4px; height: 138px; align-items: center; justify-items: center; border-bottom: 1px solid #dcddd8; }
.icons svg { width: 13px; height: 13px; }
.icons em { font-style: normal; font-weight: 700; font-size: 10px; line-height: 12px; color: #3478a8; }
.ax { fill: none; stroke: #555; }
.ol { fill: #fafaf8; stroke: #666; stroke-width: .9; }
.ol2 { fill: none; stroke: #555; stroke-width: .8; }
.bl { fill: #6ab0e0; stroke: #35719c; stroke-width: .7; }
.bs { fill: none; stroke: #3b86b8; stroke-width: .9; }
.wells { font-size: 8.200px; padding: 7px 5px 0 4px; line-height: 12px; letter-spacing: -.1px; }
.lbl { padding-left: 4px; }
.strong { font-weight: 600; margin-top: 7px; letter-spacing: -.2px; }
.well { border: 1px dashed #d2d3cc; background: #fff; height: 18px; line-height: 16px; padding-left: 5px; margin-top: 3px; white-space: nowrap; }
.w2 { margin-top: 3px; padding-left: 4px; letter-spacing: -.2px; }
.toggle-row { display: flex; justify-content: space-between; align-items: center; padding-left: 4px; height: 18px; }
.r1 { margin-top: 1px; }
.tog { width: 21px; height: 10px; border: 1px solid #777; border-radius: 5px; display: flex; align-items: center; justify-content: space-between; padding: 0 1.500px 0 2px; font-size: 6px; }
.tog i { width: 5px; height: 5px; border-radius: 50%; background: #444; }
.on { background: #4a4a47; color: #fff; border-color: #4a4a47; }
.on i { background: #fff; }
.f-search { margin: 6px 2px 0 3px; border: 1px solid #b5b6b1; background: #fff; height: 18px; display: flex; align-items: center; gap: 4px; padding-left: 5px; font-size: 9px; color: #555; border-radius: 2px; letter-spacing: -.1px; }
.fields ul { margin: 5px 0 0; padding: 0 0 0 7px; list-style: none; }
.fields li { display: flex; align-items: center; height: 16px; font-size: 8px; letter-spacing: -.2px; }
.fields li svg + svg { margin: 0 3px 0 3px; }

.foot { height: 39px; flex: none; background: #f3f3ef; display: flex; flex-direction: column; font-size: 8px; }
.pages { height: 24px; display: flex; line-height: 24px; border-bottom: 1px solid #e0e1dc; letter-spacing: -.1px; }
.arrows { width: 27px; margin-left: 26px; border-left: 1px solid #e0e1dc; border-right: 1px solid #bbb; display: flex; align-items: center; justify-content: center; gap: 9px; }
.pg { border-right: 1px solid #d5d5d0; text-align: center; }
.p1 { width: 55px; } .p2 { width: 56px; } .p4 { width: 55px; } .p5 { width: 51px; }
.p3 { width: 64px; background: #fff; font-weight: 700; color: #222; border-bottom: 2px solid #e3c140; letter-spacing: -.2px; }
.p6 { width: 51px; display: flex; align-items: center; justify-content: center; gap: 2px; border: 0; }
.plus { width: 27px; height: 22px; margin-top: 1px; background: #f0c815; display: flex; align-items: center; justify-content: center; }
.pane-a { margin-left: auto; width: 121px; border-left: 1px solid #dcddd8; }
.pane-b { width: 119px; border-left: 1px solid #dcddd8; }
.status { height: 15px; display: flex; justify-content: space-between; align-items: center; padding: 0 14px 0 2px; background: #f7f7f4; letter-spacing: -.1px; }
.zoom { display: flex; align-items: center; color: #777; }
.zoom span { margin: 0 11px 0 10px; letter-spacing: -.2px; }

.taskbar { height: 28px; flex: none; background: #1e1f1d; display: flex; }
.tk { display: flex; align-items: center; justify-content: center; border-bottom: 2px solid transparent; }
.win-k { width: 29px; } .view-k { width: 35px; margin-right: 4px; }
.exp-k { width: 26px; background: linear-gradient(90deg, #3d7d35 40%, #4a4a48 40%); border-color: #4fd04a; margin-right: 6px; }
.chr-k { width: 27px; border-color: #78a7cc; margin-right: 6px; }
.spo-k { width: 27px; border-color: #78a7cc; margin-right: 6px; }
.mov-k { width: 26px; margin-right: 4px; }
.pbi-k { width: 32px; background: #555654; border-color: #78a7cc; }
.clock { margin-left: auto; width: 42px; display: flex; flex-direction: column; align-items: center; font-size: 8px; line-height: 12px; padding-top: 2px; color: #f1f1f1; letter-spacing: -.2px; white-space: nowrap; }
```
